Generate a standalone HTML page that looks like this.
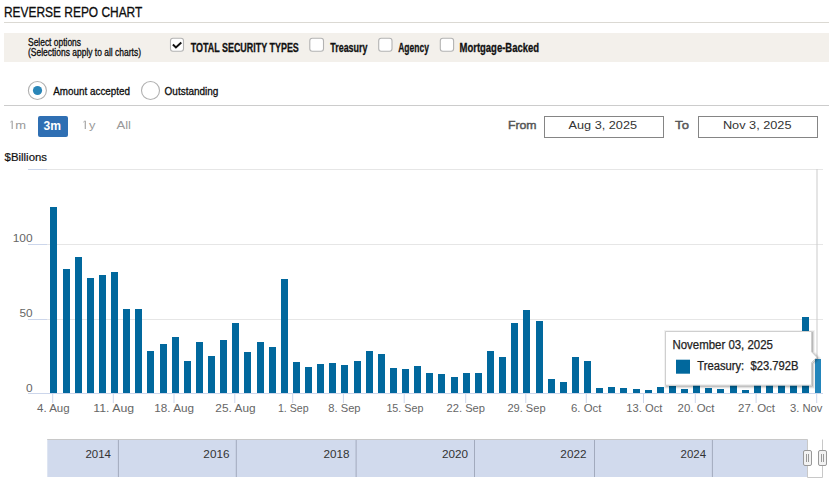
<!DOCTYPE html>
<html><head><meta charset="utf-8">
<style>
html,body{margin:0;padding:0;background:#fff;width:829px;height:485px;overflow:hidden}
svg{display:block}
text{font-family:"Liberation Sans",sans-serif}
</style></head><body>
<svg width="829" height="485" viewBox="0 0 829 485">
<!-- header -->
<rect x="4" y="22" width="825" height="1" fill="#dbd9d3"/>
<rect x="4" y="33" width="825" height="29" fill="#f3f0eb"/>
<rect x="170.5" y="38.3" width="13" height="13" rx="2.5" fill="#fff" stroke="#b3b3b3" stroke-width="1.1"/>
<path d="M172.9 44.6 L175.9 47.4 L181.3 42.6" fill="none" stroke="#111" stroke-width="2"/>
<rect x="309.8" y="38.3" width="13.7" height="13" rx="2.5" fill="#fff" stroke="#b3b3b3" stroke-width="1.1"/>
<rect x="378.7" y="38.3" width="13.3" height="13" rx="2.5" fill="#fff" stroke="#b3b3b3" stroke-width="1.1"/>
<rect x="440.3" y="38.3" width="13.3" height="13" rx="2.5" fill="#fff" stroke="#b3b3b3" stroke-width="1.1"/>
<circle cx="37.4" cy="90.5" r="9" fill="#fff" stroke="#b0b0b0" stroke-width="1.1"/>
<circle cx="37.5" cy="90.5" r="4.6" fill="#2a86b8"/>
<circle cx="150.5" cy="90.5" r="9" fill="#fff" stroke="#b0b0b0" stroke-width="1.1"/>
<rect x="4" y="105" width="825" height="1" fill="#cccccc"/>
<path d="M11.6 120.8 h1.2 v8.2 h-1.2 z" fill="#a5a5a5"/><path d="M10.3 122.2 L11.9 121" stroke="#a5a5a5" stroke-width="0.9"/>
<path d="M84.7 120.8 h1.2 v8.2 h-1.2 z" fill="#a5a5a5"/><path d="M83.3 122.2 L84.9 121" stroke="#a5a5a5" stroke-width="0.9"/>
<rect x="38" y="116" width="30" height="21" rx="2" fill="#2f6fb3"/>
<rect x="544.5" y="116.5" width="119" height="21" fill="#fff" stroke="#858585"/>
<rect x="698.5" y="116.5" width="119" height="21" fill="#fff" stroke="#858585"/>
<rect x="28" y="169" width="795" height="1" fill="#e6e6e6"/>
<rect x="28" y="244" width="795" height="1" fill="#e6e6e6"/>
<rect x="28" y="319" width="795" height="1" fill="#e6e6e6"/>
<rect x="28" y="169" width="19" height="1" fill="#ccd6eb"/>
<rect x="28" y="244" width="19" height="1" fill="#ccd6eb"/>
<rect x="28" y="319" width="19" height="1" fill="#ccd6eb"/>
<rect x="816.5" y="169" width="1" height="224" fill="#cccccc"/>
<rect x="50" y="207" width="7" height="186" fill="#01689d"/>
<rect x="63" y="269" width="7" height="124" fill="#01689d"/>
<rect x="75" y="257" width="7" height="136" fill="#01689d"/>
<rect x="87" y="278" width="7" height="115" fill="#01689d"/>
<rect x="99" y="275" width="7" height="118" fill="#01689d"/>
<rect x="111" y="272" width="7" height="121" fill="#01689d"/>
<rect x="123" y="309" width="7" height="84" fill="#01689d"/>
<rect x="135" y="309" width="7" height="84" fill="#01689d"/>
<rect x="147" y="351" width="7" height="42" fill="#01689d"/>
<rect x="160" y="344" width="7" height="49" fill="#01689d"/>
<rect x="172" y="337" width="7" height="56" fill="#01689d"/>
<rect x="184" y="361" width="7" height="32" fill="#01689d"/>
<rect x="196" y="342" width="7" height="51" fill="#01689d"/>
<rect x="208" y="356" width="7" height="37" fill="#01689d"/>
<rect x="220" y="340" width="7" height="53" fill="#01689d"/>
<rect x="232" y="323" width="7" height="70" fill="#01689d"/>
<rect x="244" y="352" width="7" height="41" fill="#01689d"/>
<rect x="257" y="342" width="7" height="51" fill="#01689d"/>
<rect x="269" y="347" width="7" height="46" fill="#01689d"/>
<rect x="281" y="279" width="7" height="114" fill="#01689d"/>
<rect x="293" y="362" width="7" height="31" fill="#01689d"/>
<rect x="305" y="367" width="7" height="26" fill="#01689d"/>
<rect x="317" y="364" width="7" height="29" fill="#01689d"/>
<rect x="329" y="363" width="7" height="30" fill="#01689d"/>
<rect x="341" y="365" width="7" height="28" fill="#01689d"/>
<rect x="354" y="361" width="7" height="32" fill="#01689d"/>
<rect x="366" y="351" width="7" height="42" fill="#01689d"/>
<rect x="378" y="354" width="7" height="39" fill="#01689d"/>
<rect x="390" y="368" width="7" height="25" fill="#01689d"/>
<rect x="402" y="369" width="7" height="24" fill="#01689d"/>
<rect x="414" y="366" width="7" height="27" fill="#01689d"/>
<rect x="426" y="373" width="7" height="20" fill="#01689d"/>
<rect x="438" y="374" width="7" height="19" fill="#01689d"/>
<rect x="451" y="377" width="7" height="16" fill="#01689d"/>
<rect x="463" y="373" width="7" height="20" fill="#01689d"/>
<rect x="475" y="373" width="7" height="20" fill="#01689d"/>
<rect x="487" y="351" width="7" height="42" fill="#01689d"/>
<rect x="499" y="357" width="7" height="36" fill="#01689d"/>
<rect x="511" y="323" width="7" height="70" fill="#01689d"/>
<rect x="523" y="310" width="7" height="83" fill="#01689d"/>
<rect x="536" y="321" width="7" height="72" fill="#01689d"/>
<rect x="548" y="379" width="7" height="14" fill="#01689d"/>
<rect x="560" y="382" width="7" height="11" fill="#01689d"/>
<rect x="572" y="357" width="7" height="36" fill="#01689d"/>
<rect x="584" y="361" width="7" height="32" fill="#01689d"/>
<rect x="596" y="388" width="7" height="5" fill="#01689d"/>
<rect x="608" y="387" width="7" height="6" fill="#01689d"/>
<rect x="620" y="388" width="7" height="5" fill="#01689d"/>
<rect x="633" y="389" width="7" height="4" fill="#01689d"/>
<rect x="645" y="390" width="7" height="3" fill="#01689d"/>
<rect x="657" y="387" width="7" height="6" fill="#01689d"/>
<rect x="669" y="386" width="7" height="7" fill="#01689d"/>
<rect x="681" y="389" width="7" height="4" fill="#01689d"/>
<rect x="693" y="384" width="7" height="9" fill="#01689d"/>
<rect x="705" y="388" width="7" height="5" fill="#01689d"/>
<rect x="717" y="389" width="7" height="4" fill="#01689d"/>
<rect x="730" y="384" width="7" height="9" fill="#01689d"/>
<rect x="742" y="390" width="7" height="3" fill="#01689d"/>
<rect x="754" y="384" width="7" height="9" fill="#01689d"/>
<rect x="766" y="384" width="7" height="9" fill="#01689d"/>
<rect x="778" y="384" width="7" height="9" fill="#01689d"/>
<rect x="790" y="384" width="7" height="9" fill="#01689d"/>
<rect x="802" y="317" width="7" height="76" fill="#01689d"/>
<rect x="815" y="359" width="6" height="34" fill="#2385bb"/>
<rect x="28" y="393" width="795" height="1" fill="#ccd6eb"/>
<rect x="52.2" y="393" width="1" height="10" fill="#ccd6eb"/>
<rect x="112.8" y="393" width="1" height="10" fill="#ccd6eb"/>
<rect x="173.5" y="393" width="1" height="10" fill="#ccd6eb"/>
<rect x="234.3" y="393" width="1" height="10" fill="#ccd6eb"/>
<rect x="292.2" y="393" width="1" height="10" fill="#ccd6eb"/>
<rect x="342.9" y="393" width="1" height="10" fill="#ccd6eb"/>
<rect x="403.7" y="393" width="1" height="10" fill="#ccd6eb"/>
<rect x="465.2" y="393" width="1" height="10" fill="#ccd6eb"/>
<rect x="525.3" y="393" width="1" height="10" fill="#ccd6eb"/>
<rect x="585.8" y="393" width="1" height="10" fill="#ccd6eb"/>
<rect x="643.0" y="393" width="1" height="10" fill="#ccd6eb"/>
<rect x="694.8" y="393" width="1" height="10" fill="#ccd6eb"/>
<rect x="755.6" y="393" width="1" height="10" fill="#ccd6eb"/>
<rect x="816.2" y="393" width="1" height="10" fill="#ccd6eb"/>
<g transform="translate(1,1)" fill="none" stroke="#000">
<path d="M665.5 331.5 H811.5 V351.8 L816.8 357.2 L811.5 362.6 V385.2 H665.5 Z" stroke-opacity="0.05" stroke-width="5"/>
<path d="M665.5 331.5 H811.5 V351.8 L816.8 357.2 L811.5 362.6 V385.2 H665.5 Z" stroke-opacity="0.1" stroke-width="3"/>
<path d="M665.5 331.5 H811.5 V351.8 L816.8 357.2 L811.5 362.6 V385.2 H665.5 Z" stroke-opacity="0.15" stroke-width="1"/>
</g>
<path d="M665.5 331.5 H811.5 V351.8 L816.8 357.2 L811.5 362.6 V385.2 H665.5 Z" fill="#fff" stroke="#cfcfcf"/>
<rect x="676" y="359.7" width="14" height="14" fill="#01689d"/>
<rect x="47.3" y="439" width="760" height="38" fill="#d1daed"/>
<rect x="117.9" y="439" width="1" height="38" fill="#a2aabd"/>
<rect x="235.8" y="439" width="1" height="38" fill="#a2aabd"/>
<rect x="355.6" y="439" width="1" height="38" fill="#a2aabd"/>
<rect x="474.0" y="439" width="1" height="38" fill="#a2aabd"/>
<rect x="594.0" y="439" width="1" height="38" fill="#a2aabd"/>
<rect x="711.9" y="439" width="1" height="38" fill="#a2aabd"/>
<path d="M47.3 439.5 H807.5 V477.5 H822.5 V439.5" fill="none" stroke="#c8c8c8"/>
<rect x="803.5" y="450.5" width="8" height="15" rx="1.5" fill="#f2f2f2" stroke="#999"/>
<path d="M806.5 454 V462 M808.5 454 V462" stroke="#999"/>
<rect x="818.5" y="450.5" width="8" height="15" rx="1.5" fill="#f2f2f2" stroke="#999"/>
<path d="M821.5 454 V462 M823.5 454 V462" stroke="#999"/>
<text x="4.00" y="17.2" font-size="15.4" textLength="138.30" lengthAdjust="spacingAndGlyphs" fill="#0d0d0d" stroke="#0d0d0d" stroke-width="0.3">REVERSE REPO CHART</text>
<text x="28.00" y="46.2" font-size="10" textLength="53.00" lengthAdjust="spacingAndGlyphs" fill="#0d0d0d" stroke="#0d0d0d" stroke-width="0.3">Select options</text>
<text x="28.00" y="55.9" font-size="10" textLength="113.00" lengthAdjust="spacingAndGlyphs" fill="#0d0d0d" stroke="#0d0d0d" stroke-width="0.3">(Selections apply to all charts)</text>
<text x="190.70" y="51.6" font-size="12.4" textLength="108.14" lengthAdjust="spacingAndGlyphs" font-weight="bold" fill="#111" stroke="#111" stroke-width="0.3">TOTAL SECURITY TYPES</text>
<text x="330.28" y="51.6" font-size="12.4" textLength="37.18" lengthAdjust="spacingAndGlyphs" font-weight="bold" fill="#111" stroke="#111" stroke-width="0.3">Treasury</text>
<text x="398.20" y="51.6" font-size="12.4" textLength="30.68" lengthAdjust="spacingAndGlyphs" font-weight="bold" fill="#111" stroke="#111" stroke-width="0.3">Agency</text>
<text x="459.58" y="51.6" font-size="12.4" textLength="79.38" lengthAdjust="spacingAndGlyphs" font-weight="bold" fill="#111" stroke="#111" stroke-width="0.3">Mortgage-Backed</text>
<text x="53.28" y="94.5" font-size="10.8" textLength="76.72" lengthAdjust="spacingAndGlyphs" fill="#0d0d0d" stroke="#0d0d0d" stroke-width="0.3">Amount accepted</text>
<text x="164.58" y="94.5" font-size="10.8" textLength="53.84" lengthAdjust="spacingAndGlyphs" fill="#0d0d0d" stroke="#0d0d0d" stroke-width="0.3">Outstanding</text>
<text x="15.30" y="128.9" font-size="11.3" textLength="10.78" lengthAdjust="spacingAndGlyphs" fill="#999">m</text>
<text x="43.60" y="129.8" font-size="12" textLength="17.50" lengthAdjust="spacingAndGlyphs" font-weight="bold" fill="#fff">3m</text>
<text x="89.12" y="128.9" font-size="11.3" textLength="6.42" lengthAdjust="spacingAndGlyphs" fill="#999">y</text>
<text x="116.46" y="128.9" font-size="11.3" textLength="14.58" lengthAdjust="spacingAndGlyphs" fill="#999">All</text>
<text x="507.92" y="129.1" font-size="11.8" textLength="28.66" lengthAdjust="spacingAndGlyphs" fill="#555" stroke="#555" stroke-width="0.45">From</text>
<text x="568.58" y="128.7" font-size="11.5" textLength="68.42" lengthAdjust="spacingAndGlyphs" fill="#333">Aug 3, 2025</text>
<text x="675.12" y="129.1" font-size="11.8" textLength="13.80" lengthAdjust="spacingAndGlyphs" fill="#555" stroke="#555" stroke-width="0.45">To</text>
<text x="722.92" y="128.7" font-size="11.5" textLength="68.58" lengthAdjust="spacingAndGlyphs" fill="#333">Nov 3, 2025</text>
<text x="4.58" y="161.4" font-size="11.3" textLength="42.42" lengthAdjust="spacingAndGlyphs" fill="#111" stroke="#111" stroke-width="0.2">$Billions</text>
<text x="12.72" y="242" font-size="11" textLength="19.90" lengthAdjust="spacingAndGlyphs" fill="#666">100</text>
<text x="19.50" y="317" font-size="11" textLength="13.12" lengthAdjust="spacingAndGlyphs" fill="#666">50</text>
<text x="26.00" y="391.8" font-size="11" textLength="6.62" lengthAdjust="spacingAndGlyphs" fill="#666">0</text>
<text x="37.08" y="411.6" font-size="11" textLength="32.58" lengthAdjust="spacingAndGlyphs" fill="#666">4. Aug</text>
<text x="93.34" y="411.6" font-size="11" textLength="40.78" lengthAdjust="spacingAndGlyphs" fill="#666">11. Aug</text>
<text x="154.30" y="411.6" font-size="11" textLength="39.70" lengthAdjust="spacingAndGlyphs" fill="#666">18. Aug</text>
<text x="215.38" y="411.6" font-size="11" textLength="40.20" lengthAdjust="spacingAndGlyphs" fill="#666">25. Aug</text>
<text x="277.88" y="411.6" font-size="11" textLength="30.66" lengthAdjust="spacingAndGlyphs" fill="#666">1. Sep</text>
<text x="328.34" y="411.6" font-size="11" textLength="32.24" lengthAdjust="spacingAndGlyphs" fill="#666">8. Sep</text>
<text x="386.38" y="411.6" font-size="11" textLength="37.04" lengthAdjust="spacingAndGlyphs" fill="#666">15. Sep</text>
<text x="446.54" y="411.6" font-size="11" textLength="38.46" lengthAdjust="spacingAndGlyphs" fill="#666">22. Sep</text>
<text x="507.42" y="411.6" font-size="11" textLength="38.16" lengthAdjust="spacingAndGlyphs" fill="#666">29. Sep</text>
<text x="570.96" y="411.6" font-size="11" textLength="30.42" lengthAdjust="spacingAndGlyphs" fill="#666">6. Oct</text>
<text x="626.38" y="411.6" font-size="11" textLength="36.00" lengthAdjust="spacingAndGlyphs" fill="#666">13. Oct</text>
<text x="677.58" y="411.6" font-size="11" textLength="36.88" lengthAdjust="spacingAndGlyphs" fill="#666">20. Oct</text>
<text x="738.00" y="411.6" font-size="11" textLength="37.00" lengthAdjust="spacingAndGlyphs" fill="#666">27. Oct</text>
<text x="789.92" y="411.6" font-size="11" textLength="32.50" lengthAdjust="spacingAndGlyphs" fill="#666">3. Nov</text>
<text x="85.42" y="458.2" font-size="11" textLength="25.58" lengthAdjust="spacingAndGlyphs" fill="#333">2014</text>
<text x="203.38" y="458.2" font-size="11" textLength="26.08" lengthAdjust="spacingAndGlyphs" fill="#333">2016</text>
<text x="323.54" y="458.2" font-size="11" textLength="26.00" lengthAdjust="spacingAndGlyphs" fill="#333">2018</text>
<text x="441.96" y="458.2" font-size="11" textLength="26.08" lengthAdjust="spacingAndGlyphs" fill="#333">2020</text>
<text x="560.38" y="458.2" font-size="11" textLength="26.12" lengthAdjust="spacingAndGlyphs" fill="#333">2022</text>
<text x="680.54" y="458.2" font-size="11" textLength="25.50" lengthAdjust="spacingAndGlyphs" fill="#333">2024</text>
<text x="672.46" y="349.1" font-size="12" textLength="100.46" lengthAdjust="spacingAndGlyphs" fill="#222" stroke="#222" stroke-width="0.25">November 03, 2025</text>
<text x="697.28" y="370.3" font-size="12" textLength="101.18" lengthAdjust="spacingAndGlyphs" fill="#222" stroke="#222" stroke-width="0.25" xml:space="preserve">Treasury:  $23.792B</text>

</svg>
</body></html>
